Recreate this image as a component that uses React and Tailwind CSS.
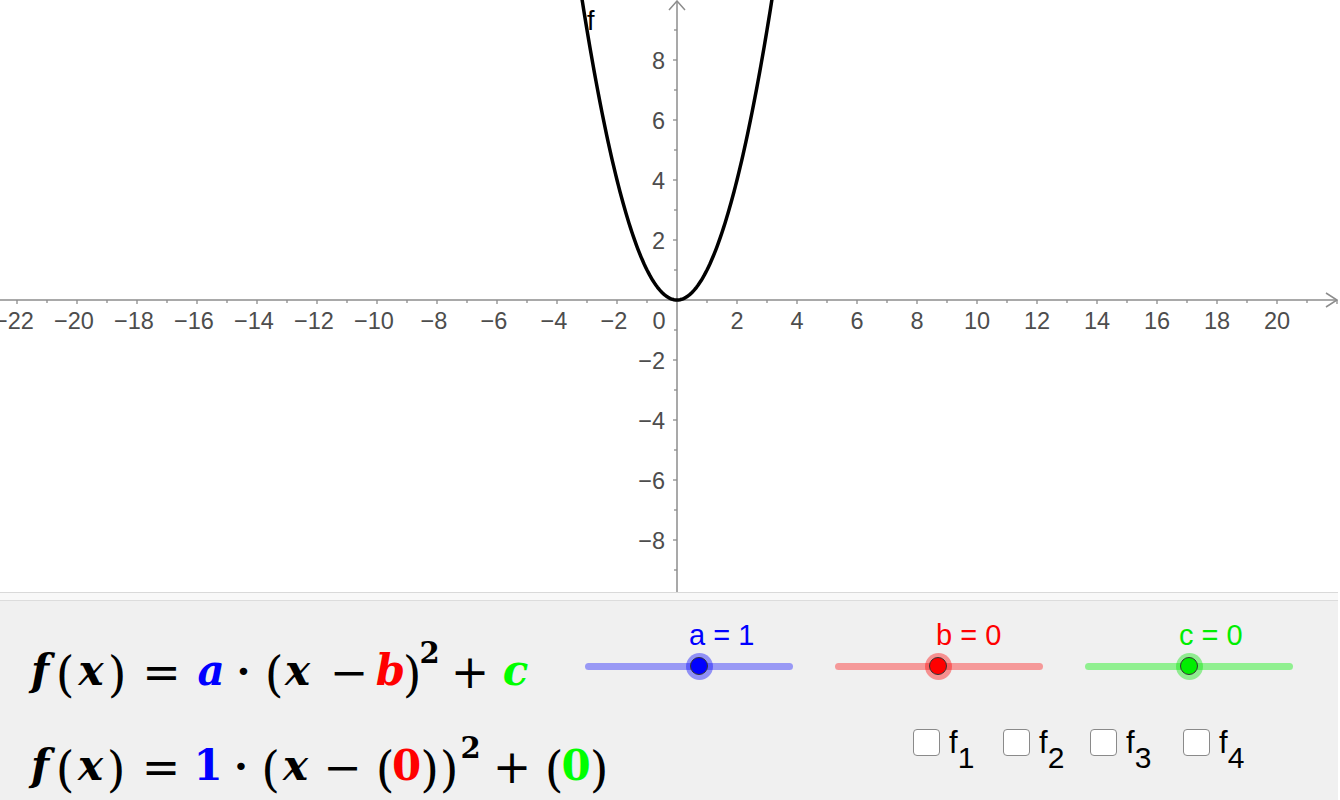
import React from "react";

const OX = 677, OY = 300, U = 30;
const AXIS = "#8c8c8c";
const LABEL = "#4d4d4d";

function Graph() {
  const xs = [];
  for (let k = -22; k <= 22; k++) xs.push(k);
  const ys = [];
  for (let k = -9; k <= 9; k++) ys.push(k);
  const pts = [];
  for (let x = -3.4; x <= 3.4001; x += 0.05) pts.push(`${(OX + U * x).toFixed(1)},${(OY - U * x * x).toFixed(1)}`);
  return (
    <svg width="1338" height="592" className="block" style={{ fontFamily: "'Liberation Sans', Arial, sans-serif" }}>
      <line x1="0" y1={OY} x2="1336" y2={OY} stroke={AXIS} strokeWidth="1.5" />
      <polyline points="1326,293 1337,300 1326,307" fill="none" stroke={AXIS} strokeWidth="1.5" />
      <line x1={OX} y1="592" x2={OX} y2="1" stroke={AXIS} strokeWidth="1.5" />
      <polyline points="669,10 677,1 685,10" fill="none" stroke={AXIS} strokeWidth="1.5" />
      {xs.map(k => k !== 0 && (
        <line key={"xt" + k} x1={OX + U * k} y1={OY} x2={OX + U * k} y2={OY + (k % 2 === 0 ? 4 : 3)} stroke={AXIS} strokeWidth="1.3" />
      ))}
      {ys.map(k => k !== 0 && (
        <line key={"yt" + k} x1={OX} y1={OY - U * k} x2={OX - (k % 2 === 0 ? 4 : 3)} y2={OY - U * k} stroke={AXIS} strokeWidth="1.3" />
      ))}
      {xs.filter(k => k % 2 === 0 && k !== 0 && k <= 20).map(k => (
        <text key={"xl" + k} x={OX + U * k + (k < 0 ? -3 : 0)} y="329" textAnchor="middle" fontSize="23.5" fill={LABEL}>
          {k < 0 ? "\u2212" + -k : k}
        </text>
      ))}
      <text x="659" y="329" textAnchor="middle" fontSize="23.5" fill={LABEL}>0</text>
      {ys.filter(k => k % 2 === 0 && k !== 0).map(k => (
        <text key={"yl" + k} x="665" y={OY - U * k + 9} textAnchor="end" fontSize="23.5" fill={LABEL}>
          {k < 0 ? "\u2212" + -k : k}
        </text>
      ))}
      <polyline points={pts.join(" ")} fill="none" stroke="#000" strokeWidth="3.5" strokeLinejoin="round" />
      <text x="587" y="30" fontSize="27" fill="#000">f</text>
    </svg>
  );
}

// glyph kinds: v = bold italic variable, p = paren, o = operator, d = bold digit, s = superscript, t = dot
const KIND = {
  v: "italic font-bold text-[42px]",
  p: "text-[48px] relative top-[6px]",
  o: "text-[46px] relative top-[3px]",
  d: "font-bold text-[42px]",
  s: "font-bold text-[29px] relative -top-[22px]",
  t: "font-bold text-[40px]",
};

const LINE1 = [
  ["f", 40, "v"], ["(", 65, "p"], ["x", 91, "v"], [")", 117, "p"], ["=", 161.5, "o"],
  ["a", 211, "v", "#0000ff"], ["·", 243.5, "t"], ["(", 274, "p"], ["x", 297.5, "v"], ["−", 349, "o"],
  ["b", 390.5, "v", "#ff0000"], [")", 412, "p"], ["2", 429.5, "s"], ["+", 470, "o"], ["c", 515.5, "v", "#00ff00"],
];

const LINE2 = [
  ["f", 40, "v"], ["(", 65, "p"], ["x", 90.5, "v"], [")", 116, "p"], ["=", 161, "o"],
  ["1", 208, "d", "#0000ff"], ["·", 241, "t"], ["(", 270.5, "p"], ["x", 295.5, "v"], ["−", 342.5, "o"],
  ["(", 385, "p"], ["0", 406.5, "d", "#ff0000"], [")", 429.5, "p"], [")", 449, "p"], ["2", 470.5, "s"],
  ["+", 512, "o"], ["(", 554, "p"], ["0", 576, "d", "#00ff00"], [")", 599, "p"],
];

const BOX = 40;

function Formula({ glyphs }) {
  let prev = 0;
  return (
    <div className="flex items-baseline h-[52px] leading-[52px] text-black whitespace-nowrap" style={{ fontFamily: "'DejaVu Serif', 'Liberation Serif', serif" }}>
      {glyphs.map(([t, c, k, col], i) => {
        const ml = c - BOX / 2 - prev;
        prev = c + BOX / 2;
        return (
          <span key={i} className={"inline-block shrink-0 w-[40px] text-center " + KIND[k]} style={{ marginLeft: ml, color: col }}>
            {t}
          </span>
        );
      })}
    </div>
  );
}

function Slider({ label, color, track, halo, knob, labelPad }) {
  return (
    <div className="w-[250px] shrink-0">
      <div className="h-[34px] leading-[34px] text-[29px] whitespace-nowrap" style={{ paddingLeft: labelPad, color }}>{label}</div>
      <div className="relative h-[28px] w-[208px]">
        <div className="absolute left-0 right-0 top-[10.5px] h-[7px] rounded-full" style={{ background: track }} />
        <div className="absolute top-[0.5px] w-[27px] h-[27px] rounded-full" style={{ left: knob - 13.5, background: halo }} />
        <div className="absolute top-[5px] w-[18px] h-[18px] rounded-full border border-[#333]" style={{ left: knob - 9, background: color }} />
      </div>
    </div>
  );
}

function Check({ n, w }) {
  return (
    <div className="flex items-start shrink-0" style={{ width: w }}>
      <div className="w-[27px] h-[27px] rounded-[4px] border-[1.5px] border-[#8a8a8a] bg-white" />
      <div className="ml-[9px] text-[31px] leading-[28px] text-black whitespace-nowrap">
        f<span className="text-[30px] relative top-[15px]">{n}</span>
      </div>
    </div>
  );
}

export default function App() {
  return (
    <div className="w-[1340px] h-[800px] bg-white overflow-hidden" style={{ fontFamily: "'Liberation Sans', Arial, sans-serif" }}>
      <Graph />
      <div className="w-[1338px] h-[1px] bg-[#d9d9d9]" />
      <div className="w-[1338px] h-[7px] bg-[#f8f8f8]" />
      <div className="w-[1338px] h-[200px] bg-[#f0f0f0] border-t border-[#dcdcdc]">
        <div className="flex h-[114px]">
          <div className="w-[585px] shrink-0 pt-[41px]">
            <Formula glyphs={LINE1} />
          </div>
          <div className="flex pt-[17px]">
            <Slider label="a = 1" color="#0000ff" track="#9999f5" halo="rgba(0,0,255,0.4)" knob={114} labelPad={104} />
            <Slider label="b = 0" color="#ff0000" track="#f59999" halo="rgba(255,0,0,0.4)" knob={103} labelPad={101} />
            <Slider label="c = 0" color="#00ee00" track="#90f090" halo="rgba(0,230,0,0.4)" knob={104} labelPad={94} />
          </div>
        </div>
        <div className="flex">
          <div className="w-[913px] shrink-0 pt-[22px]">
            <Formula glyphs={LINE2} />
          </div>
          <div className="flex pt-[14px]">
            <Check n="1" w={90} />
            <Check n="2" w={87} />
            <Check n="3" w={93} />
            <Check n="4" w={90} />
          </div>
        </div>
      </div>
    </div>
  );
}
